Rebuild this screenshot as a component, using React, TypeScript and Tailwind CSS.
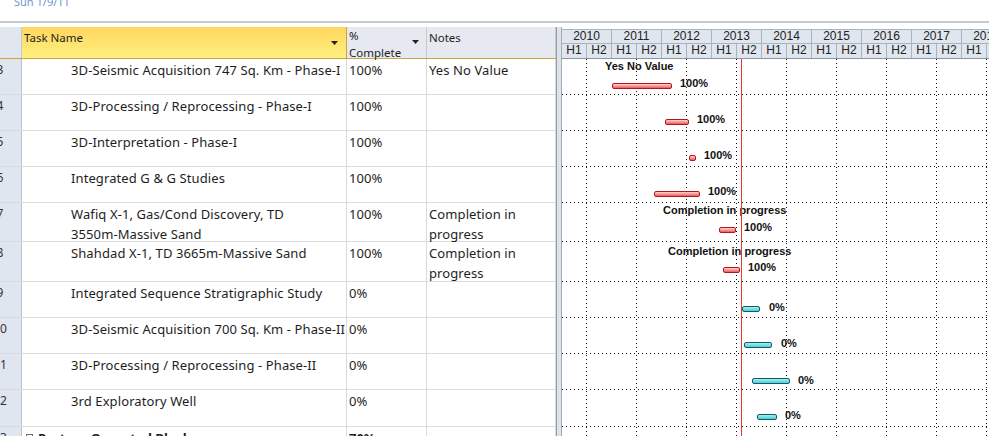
const rows = [
  { n: "3", name: "3D-Seismic Acquisition 747 Sq. Km - Phase-I", pct: "100%", notes: ["Yes No Value"], h: 36 },
  { n: "4", name: "3D-Processing / Reprocessing - Phase-I", pct: "100%", notes: [], h: 36 },
  { n: "5", name: "3D-Interpretation - Phase-I", pct: "100%", notes: [], h: 36 },
  { n: "6", name: "Integrated G & G Studies", pct: "100%", notes: [], h: 36 },
  { n: "7", name: "Wafiq X-1, Gas/Cond Discovery, TD 3550m-Massive Sand", pct: "100%", notes: ["Completion in", "progress"], h: 39 },
  { n: "8", name: "Shahdad X-1, TD 3665m-Massive Sand", pct: "100%", notes: ["Completion in", "progress"], h: 40 },
  { n: "9", name: "Integrated Sequence Stratigraphic Study", pct: "0%", notes: [], h: 36 },
  { n: "10", name: "3D-Seismic Acquisition 700 Sq. Km - Phase-II", pct: "0%", notes: [], h: 36 },
  { n: "11", name: "3D-Processing / Reprocessing - Phase-II", pct: "0%", notes: [], h: 36 },
  { n: "12", name: "3rd Exploratory Well", pct: "0%", notes: [], h: 37 },
];

const wafiqLines = ["Wafiq X-1, Gas/Cond Discovery, TD", "3550m-Massive Sand"];

const years = ["2010", "2011", "2012", "2013", "2014", "2015", "2016", "2017", "2018"];

// timeline coordinates are page x / y; gantt body starts at x=562, y=59
const bars = [
  { x: 612, w: 60, y: 83, red: true, label: "100%", lx: 680, ly: 78 },
  { x: 665, w: 24, y: 119, red: true, label: "100%", lx: 697, ly: 114 },
  { x: 689, w: 7, y: 155, red: true, label: "100%", lx: 704, ly: 150 },
  { x: 654, w: 46, y: 191, red: true, label: "100%", lx: 708, ly: 186 },
  { x: 719, w: 17, y: 227, red: true, label: "100%", lx: 744, ly: 222 },
  { x: 723, w: 17, y: 267, red: true, label: "100%", lx: 748, ly: 262 },
  { x: 742, w: 18, y: 306, red: false, label: "0%", lx: 769, ly: 302 },
  { x: 744, w: 28, y: 342, red: false, label: "0%", lx: 781, ly: 338 },
  { x: 752, w: 38, y: 378, red: false, label: "0%", lx: 798, ly: 375 },
  { x: 757, w: 20, y: 414, red: false, label: "0%", lx: 785, ly: 410 },
];

const notes = [
  { text: "Yes No Value", x: 605, y: 61 },
  { text: "Completion in progress", x: 663, y: 205 },
  { text: "Completion in progress", x: 668, y: 246 },
];

const dotsX = [586, 636, 686, 736, 786, 836, 886, 936, 986];

function Arrow() {
  return (
    <svg width="8" height="5" viewBox="0 0 8 5" className="shrink-0">
      <path d="M0 0h7L3.5 4z" fill="#222" />
    </svg>
  );
}

function RowNum({ n }: { n: string }) {
  return (
    <div className="w-[22px] bg-[#dfe6ef] border-r border-[#b9c3cf] overflow-hidden">
      <div className="w-[40px] -ml-[20px] text-center pt-[1px] text-[12px] text-[#333]">{n}</div>
    </div>
  );
}

export default function App() {
  return (
    <div className="w-[989px] h-[436px] overflow-hidden bg-white text-[#1e1e1e] font-['Noto_Sans',sans-serif]">
      <div className="h-[21px] relative overflow-hidden">
        <span className="absolute left-[14px] top-[-5px] text-[11px] leading-[13px] text-[#6f93c8]">Sun 1/9/11</span>
      </div>
      <div className="h-[2px] bg-[#c6c9ce]" />
      <div className="h-[4px]" />

      <div className="flex">
        {/* table */}
        <div className="w-[556px] shrink-0">
          <div className="flex h-[32px] border-b border-[#c9a548] text-[11.5px]">
            <div className="w-[22px] bg-[#e2e6ee] border-r border-[#c3cad4]" />
            <div className="w-[325px] border-r border-[#c9a548] bg-gradient-to-b from-[#ffd65c] to-[#fff080] flex items-start justify-between pl-[2px] pr-[7px] pt-[2px]">
              <span>Task Name</span>
              <div className="mt-[12px]"><Arrow /></div>
            </div>
            <div className="w-[80px] border-r border-[#c3cad4] bg-[#e6e9ef] flex justify-between pl-[2px] pr-[6px] leading-[17px]">
              <span>%<br />Complete</span>
              <div className="mt-[13px]"><Arrow /></div>
            </div>
            <div className="w-[129px] border-r border-[#c3cad4] bg-[#e6e9ef] pl-[2px] pt-[2px]">Notes</div>
          </div>

          {rows.map((r) => (
            <div key={r.n} className="flex border-b border-[#dadada] text-[13px] leading-[20px] tracking-[0.1px]" style={{ height: r.h }}>
              <RowNum n={r.n} />
              <div className="w-[325px] border-r border-[#dadada] pl-[49px] pt-[1px] whitespace-nowrap">
                {r.n === "7" ? wafiqLines.map((l) => <div key={l}>{l}</div>) : r.name}
              </div>
              <div className="w-[80px] border-r border-[#dadada] pl-[2px] pt-[1px]">{r.pct}</div>
              <div className="w-[129px] border-r border-[#dadada] pl-[2px] pt-[1px]">
                {r.notes.map((l) => <div key={l}>{l}</div>)}
              </div>
            </div>
          ))}

          <div className="flex h-[40px] text-[13px] leading-[20px]">
            <RowNum n="13" />
            <div className="w-[325px] border-r border-[#dadada] pl-[4px] pt-[1px] flex items-start gap-[5px] font-bold">
              <span className="mt-[6px] w-[7px] h-[7px] border border-[#6b6b6b] flex items-center justify-center">
                <span className="w-[3px] h-[1px] bg-[#333]" />
              </span>
              <span>Partner Operated Blocks</span>
            </div>
            <div className="w-[80px] border-r border-[#dadada] pl-[2px] pt-[1px] font-bold">70%</div>
            <div className="w-[129px] border-r border-[#dadada]" />
          </div>
        </div>

        {/* splitter */}
        <div className="w-[6px] shrink-0 border-l border-r border-l-[#9a9a9a] border-r-[#a3acb8] bg-[#dde3eb]" />

        {/* gantt */}
        <div className="flex-1 overflow-hidden">
          <div className="pt-[2px] font-['Liberation_Sans',sans-serif] text-[12px] leading-[13px] text-[#222]">
            <div className="flex h-[15px] border-t border-b border-[#a9b4c2] bg-[#e0e6ee] w-[460px]">
              {years.map((y) => (
                <div key={y} className="w-[50px] shrink-0 border-r border-[#a9b4c2] text-center">{y}</div>
              ))}
            </div>
            <div className="flex h-[15px] border-b border-[#8d96a3] bg-[#e0e6ee] w-[460px]">
              {years.map((y) => (
                <div key={y} className="flex shrink-0">
                  <div className="w-[25px] border-r border-[#a9b4c2] text-center">H1</div>
                  <div className="w-[25px] border-r border-[#a9b4c2] text-center">H2</div>
                </div>
              ))}
            </div>
          </div>

          <div className="relative">
            {rows.map((r) => (
              <div key={r.n} style={{ height: r.h }} className="relative">
                <div className="absolute left-0 right-0 bottom-0 h-[1px] bg-[repeating-linear-gradient(to_right,#111_0_1px,transparent_1px_4px)]" />
              </div>
            ))}
            <div className="h-[40px]" />

            {dotsX.map((x) => (
              <div
                key={x}
                className="absolute top-0 bottom-0 w-[1px] bg-[repeating-linear-gradient(to_bottom,#111_0_1px,transparent_1px_4px)]"
                style={{ left: x - 562 }}
              />
            ))}

            {notes.map((n, i) => (
              <div
                key={i}
                className="absolute whitespace-nowrap font-['Liberation_Sans',sans-serif] font-bold text-[11px] leading-[11px] text-[#111]"
                style={{ left: n.x - 562, top: n.y - 59 }}
              >
                {n.text}
              </div>
            ))}

            {bars.map((b, i) => (
              <div key={i}>
                <div
                  className={
                    b.red
                      ? "absolute h-[6px] rounded-[2px] border border-[#b3161c] bg-gradient-to-b from-[#fcd2d2] to-[#e8595c]"
                      : "absolute h-[6px] rounded-[2px] border border-[#1c5860] bg-gradient-to-b from-[#9ef0f4] to-[#3fd0da]"
                  }
                  style={{ left: b.x - 562, top: b.y - 59, width: b.w }}
                />
                <div
                  className="absolute whitespace-nowrap font-['Liberation_Sans',sans-serif] font-bold text-[11px] leading-[11px] text-[#111]"
                  style={{ left: b.lx - 562, top: b.ly - 59 }}
                >
                  {b.label}
                </div>
              </div>
            ))}

            <div className="absolute top-0 bottom-0 w-[1px] bg-[#e03a32]" style={{ left: 741 - 562 }} />
          </div>
        </div>
      </div>
    </div>
  );
}
